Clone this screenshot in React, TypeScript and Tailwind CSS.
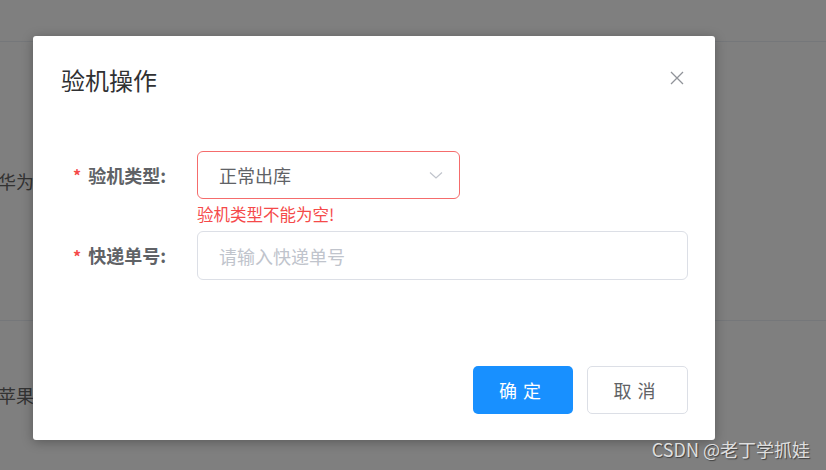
import { useState } from "react";

const font = {
  fontFamily: '"Noto Sans CJK SC", "Noto Sans", sans-serif',
};

function BackgroundTable() {
  return (
    <div className="flex flex-col bg-white text-[18px] text-[#666]">
      <div className="h-[42px] border-b border-[#ebeef5]" />
      <div className="flex h-[279px] items-center border-b border-[#ebeef5]">
        <span className="-ml-[2px]">华为</span>
      </div>
      <div className="flex h-[149px] items-center pb-[4px]">
        <span className="-ml-[2px] mt-[4px]">苹果</span>
      </div>
    </div>
  );
}

function Chevron() {
  return (
    <svg width="16" height="16" viewBox="0 0 16 16" fill="none">
      <path d="M2 5.5 L8 11 L14 5.5" stroke="#c0c4cc" strokeWidth="1.2" />
    </svg>
  );
}

function CloseIcon() {
  return (
    <svg width="16" height="16" viewBox="0 0 16 16" fill="none">
      <path d="M2 2 L14 14 M14 2 L2 14" stroke="#909399" strokeWidth="1.3" />
    </svg>
  );
}

export default function App() {
  const [tracking, setTracking] = useState("");

  return (
    <div className="relative h-[470px] w-[826px] overflow-hidden" style={font}>
      <BackgroundTable />
      <div className="absolute inset-0 bg-black/50" />

      <div className="absolute left-[33px] top-[36px] flex h-[404px] w-[682px] flex-col rounded-[3px] bg-white shadow-[0_2px_12px_rgba(0,0,0,0.3)]">
        <div className="flex items-center justify-between pl-[28px] pr-[30px] pt-[26px]">
          <span className="text-[24px] leading-[36px] text-[#303133]">验机操作</span>
          <button className="mt-[-4px] flex h-[16px] w-[16px] items-center justify-center">
            <CloseIcon />
          </button>
        </div>

        <div className="flex flex-col pr-[27px] pt-[53px]">
          <div className="flex items-start">
            <label className="flex h-[48px] w-[164px] items-center justify-end pr-[31px] text-[18px] font-bold text-[#606266]">
              <span className="mr-[7px] text-[16px] text-[#f54a4a]">*</span>
              验机类型:
            </label>
            <div className="flex flex-col">
              <div className="flex h-[48px] w-[263px] items-center justify-between rounded-[6px] border border-[#f56c6c] pl-[21px] pr-[15px] text-[18px] text-[#606266]">
                <span>正常出库</span>
                <Chevron />
              </div>
              <span className="h-[32px] pt-[4px] text-[16.5px] leading-[22px] text-[#f54a4a]">
                验机类型不能为空!
              </span>
            </div>
          </div>

          <div className="flex items-start">
            <label className="flex h-[49px] w-[164px] items-center justify-end pr-[31px] text-[18px] font-bold text-[#606266]">
              <span className="mr-[7px] text-[16px] text-[#f54a4a]">*</span>
              快递单号:
            </label>
            <input
              value={tracking}
              onChange={(e) => setTracking(e.target.value)}
              placeholder="请输入快递单号"
              className="h-[49px] flex-1 rounded-[6px] border border-[#dcdfe6] pl-[21px] text-[18px] text-[#606266] outline-none placeholder:text-[#c0c4cc]"
            />
          </div>
        </div>

        <div className="mt-auto flex justify-end gap-[14px] pb-[26px] pr-[27px]">
          <button className="h-[48px] w-[100px] rounded-[5px] bg-[#1890ff] text-[18px] tracking-[6px] text-white">
            确定
          </button>
          <button className="h-[48px] w-[101px] rounded-[5px] border border-[#dcdfe6] bg-white text-[18px] tracking-[6px] text-[#606266]">
            取消
          </button>
        </div>
      </div>

      <div className="absolute bottom-[7px] right-[16px] text-[18px] text-[#dedede] [text-shadow:1px_1px_1px_rgba(0,0,0,0.5)]">
        CSDN @老丁学抓娃
      </div>
    </div>
  );
}
